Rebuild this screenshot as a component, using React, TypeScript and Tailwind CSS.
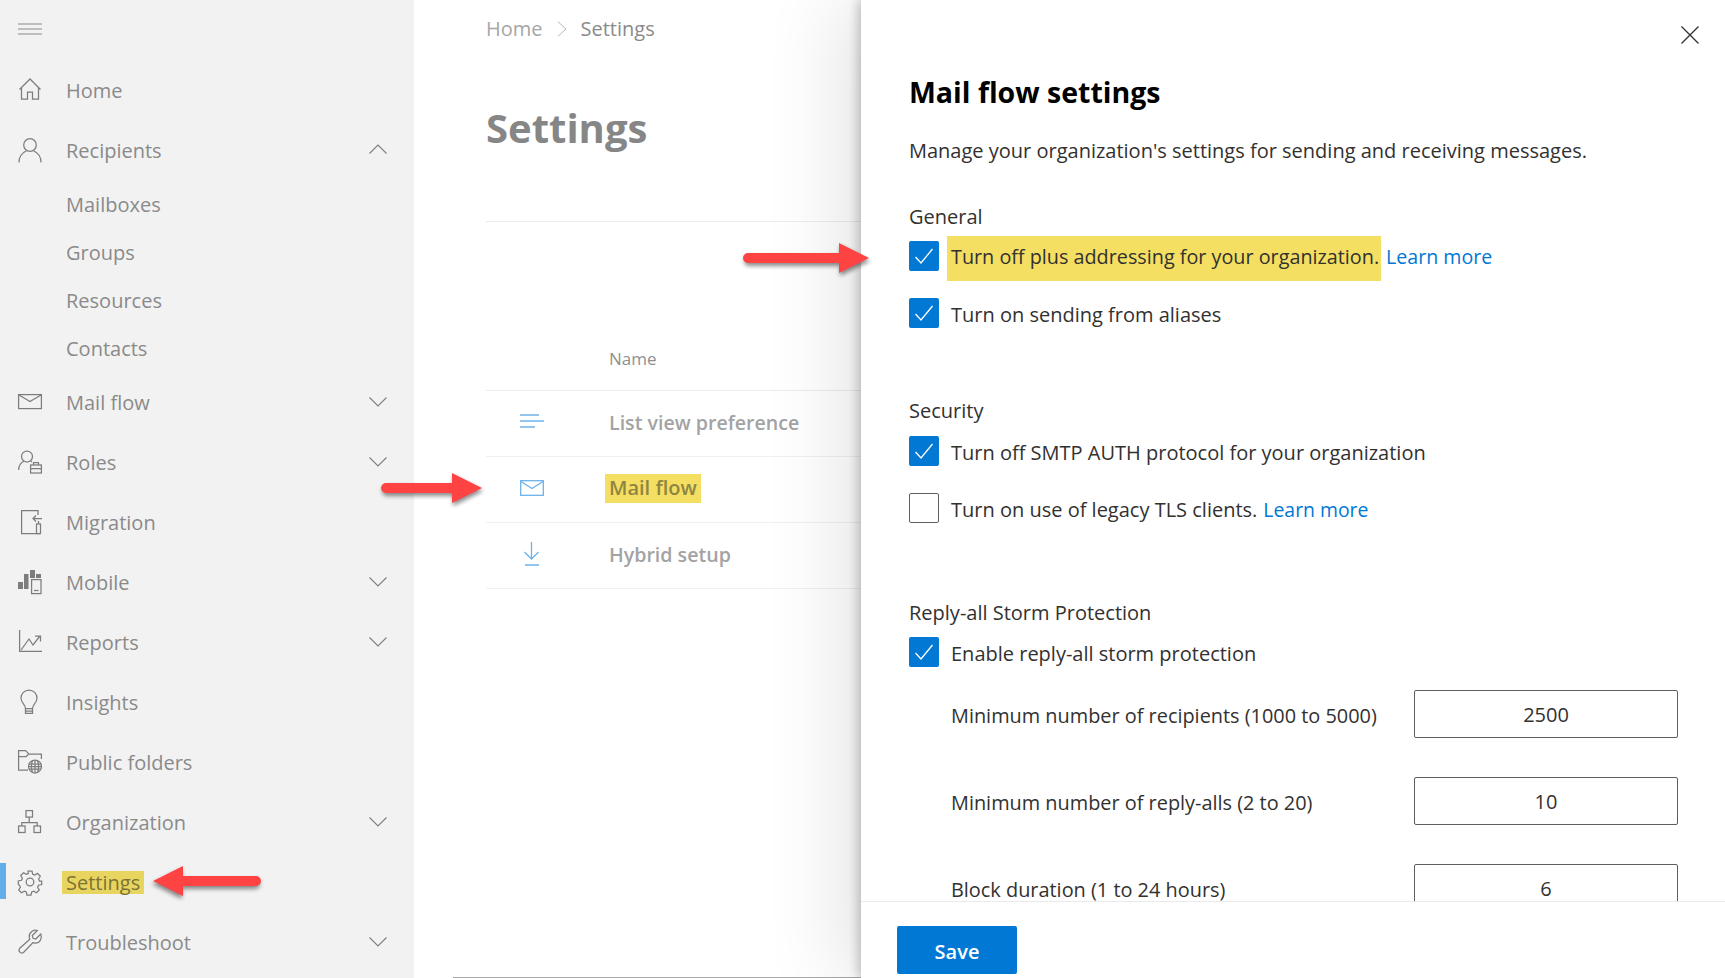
const FONT = "font-['Open_Sans','Liberation_Sans',sans-serif]"

// sidebar icons are drawn on a 24x24 box, thin stroke like the Fluent set
const ICONS: Record<string, React.ReactNode> = {
  home: <path d="M1.5 11.500 12 1l10.500 10.500M3.500 9.500V21h6v-7h5v7h6V9.500" />,
  person: (
    <>
      <circle cx="12" cy="7" r="6.300" />
      <path d="M1 24.500c0-6 3.500-10 7.500-11.800M23 24.500c0-6-3.500-10-7.500-11.800" />
    </>
  ),
  mail: (
    <>
      <rect x="0.600" y="4.600" width="22.800" height="14" />
      <path d="M1 5l11 6.500L23 5" />
    </>
  ),
  roles: (
    <>
      <circle cx="9" cy="6.500" r="5.500" />
      <path d="M.6 20c0-4.500 2.500-7.500 5.500-9M12.500 11l1.500 1" />
      <rect x="12.600" y="15" width="10.800" height="8" />
      <path d="M15.500 15v-2.500h5V15M12.600 18.500h10.800" />
    </>
  ),
  migration: (
    <>
      <path d="M20 5V.6H3.600v23H22" />
      <path d="M24 8.500h-9M18 5.500l-3 3 3 3M20.500 11v3" />
      <rect x="18.500" y="14" width="4" height="9.600" />
    </>
  ),
  mobile: (
    <>
      <rect x="13.600" y="9.600" width="9.400" height="14" />
      <path d="M16 20.500h4.500" />
      <rect x="0" y="12" width="5" height="7" fill="currentColor" stroke="none" />
      <rect x="6" y="4" width="4.500" height="15" fill="currentColor" stroke="none" />
      <rect x="12" y="0" width="5" height="8" fill="currentColor" stroke="none" />
      <rect x="18" y="4" width="5" height="4" fill="currentColor" stroke="none" />
    </>
  ),
  reports: <path d="M1.600 0v21.400H24M3 20l8-11 4 6 7-9M17 6h5.500v5.500" />,
  bulb: (
    <>
      <path d="M7.500 18.500c0-4-4.500-5.500-4.500-10.500a8 8 0 0 1 16 0c0 5-4.500 6.500-4.500 10.500z" />
      <path d="M7.500 18.500v4.900h7v-4.900M7.500 21h7" />
    </>
  ),
  folders: (
    <>
      <path d="M10 20H.6V.6h7l3.500 3.500h12.300V9" />
      <path d="M.6 6.500h7.500l2.500-2.400" />
      <circle cx="17" cy="16.500" r="6.500" />
      <path d="M10.500 16.500h13M17 10v13M10.900 14h12.200M10.900 19h12.200M14.500 10.500c-1.500 4-1.500 8 0 12M19.500 10.500c1.500 4 1.500 8 0 12" />
    </>
  ),
  org: (
    <>
      <rect x="8" y="0.600" width="6.500" height="6.500" />
      <rect x="0.600" y="16" width="6.500" height="6.500" />
      <rect x="16" y="16" width="6.500" height="6.500" />
      <path d="M11.200 7v5.500M3.800 16v-3.500h15.400V16" />
    </>
  ),
  gear: (
    <>
      <circle cx="12" cy="12" r="3.800" />
      <path d="M10 1h4l.7 3.200 2 .9 2.800-1.700 2.800 2.800-1.700 2.800.9 2L23.700 11v3.500l-3.200.7-.9 2 1.700 2.800-2.800 2.800-2.800-1.700-2 .9-.7 3.200h-4l-.7-3.200-2-.9-2.800 1.700-2.800-2.800 1.700-2.800-.9-2L.3 14.500V11l3.200-.7.900-2L2.700 5.500 5.500 2.700l2.800 1.700 2-.9z" />
    </>
  ),
  wrench: (
    <path d="M22.800 4l-5 5-2.800-.7-.7-2.800 5-5c-3.500-1-8.500 1.500-8 6.500.1 1 .3 1.600.5 2.200L1.500 18.500a2.900 2.900 0 0 0 4 4l9.300-9.800c.6.200 1.300.4 2.100.5 5 .3 7.700-5 5.900-9.200z" />
  )
}

function NavIcon({ name }: { name: string }) {
  return (
    <svg viewBox="0 0 24 24" fill="none" stroke="currentColor" strokeWidth="1.250" overflow="visible" className="size-6 shrink-0 text-[#7d7d7d]">
      {ICONS[name]}
    </svg>
  )
}

function Chevron({ up }: { up?: boolean }) {
  return (
    <svg
      viewBox="0 0 18 10"
      width="18"
      height="10"
      fill="none"
      stroke="#7d7d7d"
      strokeWidth="1.100"
      className={up ? "mb-[3px] ml-auto" : "ml-auto"}
    >
      <path d={up ? "M.5 9.500 9 1l8.500 8.500" : "M.5.5 9 9l8.500-8.500"} />
    </svg>
  )
}

const NAV_ITEMS = [
  { label: "Home", icon: "home" },
  { label: "Recipients", icon: "person", open: true },
  { label: "Mailboxes", sub: true },
  { label: "Groups", sub: true },
  { label: "Resources", sub: true },
  { label: "Contacts", sub: true },
  { label: "Mail flow", icon: "mail", closed: true },
  { label: "Roles", icon: "roles", closed: true },
  { label: "Migration", icon: "migration" },
  { label: "Mobile", icon: "mobile", closed: true },
  { label: "Reports", icon: "reports", closed: true },
  { label: "Insights", icon: "bulb" },
  { label: "Public folders", icon: "folders" },
  { label: "Organization", icon: "org", closed: true },
  { label: "Settings", icon: "gear", active: true },
  { label: "Troubleshoot", icon: "wrench", closed: true }
]

function Sidebar() {
  return (
    <aside className="flex h-full w-[414px] shrink-0 flex-col bg-[#f2f2f2] text-[20px] text-[#8a8a8a]">
      <div className="flex h-[60px] items-start pl-[18px] pt-[23px]">
        <svg viewBox="0 0 24 12" width="24" height="12" stroke="#8a8a8a" strokeWidth="1">
          <path d="M0 1h24M0 6h24M0 11h24" />
        </svg>
      </div>
      {NAV_ITEMS.map(item =>
        item.sub ? (
          <div key={item.label} className="flex h-12 items-center pl-[66px] pt-[2px]">
            {item.label}
          </div>
        ) : (
          <div key={item.label} className="relative flex h-[60px] items-center pl-[18px] pr-[27px]">
            {item.active && <div className="absolute left-0 top-[11px] h-9 w-1.5 bg-[#62aeea]" />}
            <NavIcon name={item.icon as string} />
            {item.active ? (
              <span className="ml-[20px] flex h-[23px] items-center bg-[#e8d55f] px-[4px] pt-[2px] text-[#7d7234]">
                {item.label}
              </span>
            ) : (
              <span className="ml-[24px] pt-[2px]">{item.label}</span>
            )}
            {item.closed && <Chevron />}
            {item.open && <Chevron up />}
          </div>
        )
      )}
    </aside>
  )
}

const ROWS = [
  {
    label: "List view preference",
    icon: <path d="M0 1h19M0 7h24M0 13h15" />
  },
  {
    label: "Mail flow",
    icon: (
      <>
        <rect x="0.700" y="0.700" width="22.600" height="14.600" />
        <path d="M1 1.500l11 7 11-7" />
      </>
    ),
    mark: true
  },
  {
    label: "Hybrid setup",
    icon: <path d="M11.500 -4v17M4.500 6l7 7 7-7M5 19h14" />
  }
]

function SettingsPage() {
  return (
    <main className="relative flex h-full w-[447px] shrink-0 flex-col pl-[72px]">
      <div className="flex h-[56px] items-center pt-[1px] text-[20px] text-[#a6a6a6]">
        <span>Home</span>
        <svg viewBox="0 0 12 20" width="10" height="16" fill="none" stroke="#a6a6a6" strokeWidth="1" className="mx-[14px]">
          <path d="M1 1l10 9-10 9" />
        </svg>
        <span className="text-[#8a8a8a]">Settings</span>
      </div>
      <h1 className="h-[165px] pt-[44px] text-[40px] font-bold leading-[56px] text-[#868686]">Settings</h1>
      <div className="flex h-[170px] items-end border-y border-y-[#ececec] pb-[19px]">
        <span className="ml-[123px] text-[17px] text-[#8f8f8f]">Name</span>
      </div>
      {ROWS.map(row => (
        <div key={row.label} className="flex h-[66px] items-center border-b border-[#f0f0f0] pb-[3px] pl-[34px]">
          <svg viewBox="0 0 24 16" width="24" height="16" fill="none" stroke="#6cb2ea" strokeWidth="1.300" overflow="visible">
            {row.icon}
          </svg>
          {row.mark ? (
            <span className="ml-[61px] flex h-[29px] items-center bg-[#f4df62] px-[4px] text-[20px] font-semibold text-[#8f8543]">
              {row.label}
            </span>
          ) : (
            <span className="ml-[65px] pt-[2px] text-[19.600px] font-semibold text-[#a3a3a3]">{row.label}</span>
          )}
        </div>
      ))}
      <div className="absolute bottom-0 left-[39px] right-0 h-px bg-[#aaaaaa]" />
    </main>
  )
}

function Checkbox({ checked = true }: { checked?: boolean }) {
  return checked ? (
    <span className="flex size-[30px] shrink-0 items-center justify-center rounded-[2px] bg-[#0078d4]">
      <svg viewBox="0 0 20 20" width="20" height="20" fill="none" stroke="#fff" strokeWidth="1.300">
        <path d="M1.500 11l5.500 6L18.500 3" />
      </svg>
    </span>
  ) : (
    <span className="size-[30px] shrink-0 rounded-[2px] border border-[#5f5e5c] bg-white" />
  )
}

function CheckRow({ label, link, checked, className }: { label: string; link?: boolean; checked?: boolean; className?: string }) {
  return (
    <div className={`flex h-[30px] items-center ${className ?? ""}`}>
      <Checkbox checked={checked} />
      <span className="ml-[12px] pt-[3px]">{label}</span>
      {link && <a className="ml-[6px] pt-[3px] text-[19.400px] text-[#0078d4]">Learn more</a>}
    </div>
  )
}

function NumberRow({ label, value, className }: { label: string; value: string; className?: string }) {
  return (
    <div className={`flex items-center pl-[42px] ${className ?? ""}`}>
      <span className="w-[463px] pt-[3px] text-[19.900px] leading-[22px]">{label}</span>
      <div className="flex h-12 w-[264px] items-center justify-center rounded-[2px] border border-[#605e5c] pt-[2px] leading-[22px]">{value}</div>
    </div>
  )
}

function MailFlowPanel() {
  return (
    <section className="relative flex h-full w-[864px] shrink-0 flex-col bg-white text-[20px] text-[#323130] shadow-[-3px_0_10px_rgba(0,0,0,0.22),-24px_0_70px_rgba(0,0,0,0.1)]">
      <button className="absolute left-[820px] top-[26px]">
        <svg viewBox="0 0 18 18" width="18" height="18" fill="none" stroke="#323130" strokeWidth="1.300">
          <path d="M.5.5l17 17M17.500.5l-17 17" />
        </svg>
      </button>
      <div className="h-[901px] overflow-hidden pl-[48px]">
        <h2 className="pt-[72px] text-[28.500px] font-bold leading-[40px] text-black">Mail flow settings</h2>
        <p className="mt-[25px] leading-[28px]">Manage your organization's settings for sending and receiving messages.</p>
        <h3 className="mt-[38px] leading-[28px]">General</h3>
        <div className="mt-[10px] flex h-[30px] items-start">
          <Checkbox />
          <span className="ml-[8px] mt-[-5px] flex h-[45px] shrink-0 items-center bg-[#f4df62] pb-[3px] pl-[4px] pr-[2px] text-[19.800px]">
            Turn off plus addressing for your organization.
          </span>
          <a className="ml-[5px] text-[19.600px] leading-[31px] text-[#0078d4]">Learn more</a>
        </div>
        <CheckRow label="Turn on sending from aliases" className="mt-[27px]" />
        <h3 className="mt-[69px] leading-[28px]">Security</h3>
        <CheckRow label="Turn off SMTP AUTH protocol for your organization" className="mt-[11px]" />
        <CheckRow label="Turn on use of legacy TLS clients." link checked={false} className="mt-[27px]" />
        <h3 className="mt-[76px] leading-[28px]">Reply-all Storm Protection</h3>
        <CheckRow label="Enable reply-all storm protection" className="mt-[10px]" />
        <NumberRow label="Minimum number of recipients (1000 to 5000)" value="2500" className="mt-[23px]" />
        <NumberRow label="Minimum number of reply-alls (2 to 20)" value="10" className="mt-[39px]" />
        <NumberRow label="Block duration (1 to 24 hours)" value="6" className="mt-[39px]" />
      </div>
      <div className="flex-1 border-t border-[#eaeaea] pl-[36px] pt-[24px]">
        <button className="h-12 w-[120px] rounded-[2px] bg-[#0078d4] pt-[3px] text-[20px] font-semibold text-white">Save</button>
      </div>
    </section>
  )
}

// red callout arrows pasted on the screenshot
function Arrow({ len, className, flip }: { len: number; className: string; flip?: boolean }) {
  const base = len - 30
  return (
    <svg
      viewBox={`0 0 ${len} 30`}
      fill="#ff4242"
      className={`absolute h-[30px] drop-shadow-[1px_3px_2px_rgba(0,0,0,0.45)] ${flip ? "-scale-x-100" : ""} ${className}`}
    >
      <path d={`M5 10h${base - 5}V0l30 15-30 15V20H5a5 5 0 0 1 0-10z`} />
    </svg>
  )
}

export default function App() {
  return (
    <div className={`relative flex h-[978px] w-[1725px] overflow-hidden bg-white ${FONT}`}>
      <Sidebar />
      <SettingsPage />
      <MailFlowPanel />
      <Arrow len={126} className="left-[743px] top-[243px] w-[126px]" />
      <Arrow len={101} className="left-[381px] top-[473px] w-[101px]" />
      <Arrow len={108} className="left-[153px] top-[866px] w-[108px]" flip />
    </div>
  )
}
